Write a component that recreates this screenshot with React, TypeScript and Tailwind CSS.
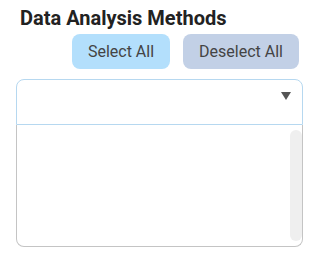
import React from 'react';

const App: React.FC = () => {
  return (
    <div className="w-[319px] h-[263px] bg-white font-['Roboto',sans-serif]">
      <div className="pl-[20px] pt-[6px]">
        <h2 className="text-[20px] font-bold leading-[24px] text-[#222]">Data Analysis Methods</h2>
      </div>
      <div className="flex justify-end gap-[13px] pr-[20px] mt-[4px]">
        <button type="button" className="w-[98px] h-[35px] rounded-[8px] bg-[#b3dffc] text-[16px] text-[#444]">
          Select All
        </button>
        <button type="button" className="w-[116px] h-[35px] rounded-[8px] bg-[#c2d0e6] text-[16px] text-[#444]">
          Deselect All
        </button>
      </div>
      <div className="mx-[16px] mt-[10px] w-[287px] h-[168px] flex flex-col">
        <div className="h-[46px] rounded-t-[8px] border border-[#b6d8f0] flex justify-end items-start pt-[12px] pr-[11px]">
          <svg width="10" height="8" viewBox="0 0 10 8">
            <path d="M0 0 L10 0 L5 8 Z" fill="#555" />
          </svg>
        </div>
        <div className="flex-1 rounded-b-[8px] border border-t-0 border-[#c4c4c4] flex justify-end pt-[5px] pb-[5px]">
          <div className="w-[12px] rounded-[6px] bg-[#efefef]" />
        </div>
      </div>
    </div>
  );
};

export default App;
